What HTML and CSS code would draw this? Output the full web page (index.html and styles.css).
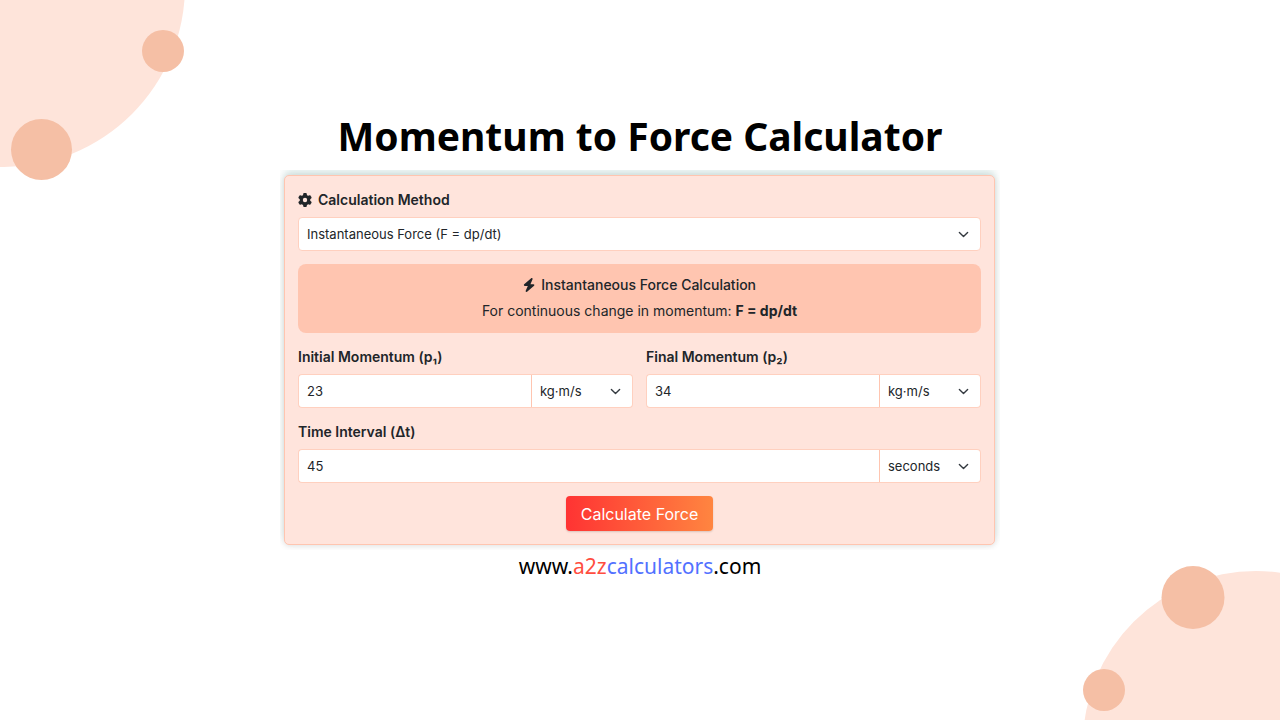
FILE: index.html
```html
<!DOCTYPE html>
<html lang="en">
<head>
    <meta charset="UTF-8">
    <title>Momentum to Force Calculator</title>
    <meta name="viewport" content="width=device-width, initial-scale=1">
    <link rel="stylesheet" href="styles.css">
</head>
<body>
    <svg class="corner corner-top" viewBox="0 0 200 190" aria-hidden="true">
        <circle class="blob" cx="4" cy="-14" r="181"/>
        <circle class="dot" cx="163" cy="51" r="21"/>
        <circle class="dot" cx="41.5" cy="149.5" r="30.5"/>
    </svg>
    <svg class="corner corner-bottom" viewBox="0 0 200 160" aria-hidden="true">
        <circle class="blob" cx="176" cy="184" r="173"/>
        <circle class="dot" cx="113" cy="37.5" r="31.5"/>
        <circle class="dot" cx="24" cy="130" r="21"/>
    </svg>

    <main class="page">
        <h1>Momentum to Force Calculator</h1>

        <div class="card-frame">
            <form class="card" id="forceForm">
                <div class="form-group">
                    <label for="method">
                        <svg class="icon" viewBox="0 0 512 512" aria-hidden="true"><path d="M495.9 166.6c3.2 8.7 .5 18.4-6.4 24.6l-43.3 39.4c1.1 8.3 1.7 16.8 1.7 25.4s-.6 17.1-1.7 25.4l43.3 39.4c6.9 6.2 9.6 15.9 6.4 24.6c-4.4 11.9-9.7 23.3-15.8 34.3l-4.7 8.1c-6.6 11-14 21.4-22.1 31.2c-5.9 7.2-15.7 9.6-24.5 6.8l-55.7-17.7c-13.4 10.3-28.2 18.9-44 25.4l-12.5 57.1c-2 9.1-9 16.3-18.2 17.8c-13.8 2.3-28 3.5-42.5 3.5s-28.7-1.2-42.5-3.5c-9.2-1.5-16.2-8.7-18.2-17.8l-12.5-57.1c-15.8-6.5-30.6-15.1-44-25.4L83.1 425.9c-8.8 2.8-18.6 .3-24.5-6.8c-8.1-9.8-15.5-20.2-22.1-31.2l-4.7-8.1c-6.1-11-11.4-22.4-15.8-34.3c-3.2-8.7-.5-18.4 6.4-24.6l43.3-39.4C64.6 273.1 64 264.6 64 256s.6-17.1 1.7-25.4L22.4 191.2c-6.9-6.2-9.6-15.9-6.4-24.6c4.4-11.9 9.7-23.3 15.8-34.3l4.7-8.1c6.6-11 14-21.4 22.1-31.2c5.9-7.2 15.7-9.6 24.5-6.8l55.7 17.7c13.4-10.3 28.2-18.9 44-25.4l12.5-57.1c2-9.1 9-16.3 18.2-17.8C227.3 1.2 241.5 0 256 0s28.7 1.2 42.5 3.5c9.2 1.5 16.2 8.7 18.2 17.8l12.5 57.1c15.8 6.5 30.6 15.1 44 25.4l55.7-17.7c8.8-2.8 18.6-.3 24.5 6.8c8.1 9.8 15.5 20.2 22.1 31.2l4.7 8.1c6.1 11 11.4 22.4 15.8 34.3zM256 336a80 80 0 1 0 0-160 80 80 0 1 0 0 160z"/></svg>
                        Calculation Method
                    </label>
                    <select id="method">
                        <option>Instantaneous Force (F = dp/dt)</option>
                    </select>
                </div>

                <div class="info-box">
                    <h2>
                        <svg class="icon" viewBox="0 0 448 512" aria-hidden="true"><path d="M349.4 44.6c5.9-13.7 1.5-29.7-10.6-38.5s-28.6-8-39.9 1.8l-256 224c-10 8.8-13.6 22.9-8.9 35.3S50.7 288 64 288H175.5L98.6 467.4c-5.9 13.7-1.5 29.7 10.6 38.5s28.6 8 39.9-1.8l256-224c10-8.8 13.6-22.9 8.9-35.3s-16.6-20.7-30-20.7H272.5L349.4 44.6z"/></svg>
                        Instantaneous Force Calculation
                    </h2>
                    <p>For continuous change in momentum: <strong>F = dp/dt</strong></p>
                </div>

                <div class="row">
                    <div class="form-group">
                        <label for="initialMomentum">Initial Momentum (p₁)</label>
                        <div class="input-group">
                            <input type="text" inputmode="decimal" id="initialMomentum" value="23">
                            <select aria-label="Initial momentum unit">
                                <option>kg·m/s</option>
                            </select>
                        </div>
                    </div>
                    <div class="form-group">
                        <label for="finalMomentum">Final Momentum (p₂)</label>
                        <div class="input-group">
                            <input type="text" inputmode="decimal" id="finalMomentum" value="34">
                            <select aria-label="Final momentum unit">
                                <option>kg·m/s</option>
                            </select>
                        </div>
                    </div>
                </div>

                <div class="form-group">
                    <label for="timeInterval">Time Interval (Δt)</label>
                    <div class="input-group">
                        <input type="text" inputmode="decimal" id="timeInterval" value="45">
                        <select aria-label="Time unit">
                            <option>seconds</option>
                        </select>
                    </div>
                </div>

                <button type="button">Calculate Force</button>
            </form>
        </div>

        <a class="site-link" href="#">www.<span class="red">a2z</span><span class="blue">calculators</span>.com</a>
    </main>
</body>
</html>
```
FILE: styles.css
```css
* {
    box-sizing: border-box;
}

body {
    margin: 0;
    min-height: 100vh;
    position: relative;
    overflow: hidden;
    background: white;
    color: #212529;
    font-family: Inter, sans-serif;
    font-size: 13px;
}

/* corner decorations */
.corner {
    position: absolute;
    width: 200px;
}

.corner-top {
    top: 0;
    left: 0;
}

.corner-bottom {
    right: 0;
    bottom: 0;
}

.blob {
    fill: #fee4da;
}

.dot {
    fill: #f5bfa5;
}

.page {
    position: relative;
    max-width: 720px;
    margin: 0 auto;
    padding-top: 104px;
    text-align: center;
}

h1 {
    margin: 0 0 2px;
    color: black;
    font-family: "Noto Sans", sans-serif;
    font-size: 39px;
    font-weight: 700;
    line-height: 64px;
}

/* the card shadow stops at the edge of this frame */
.card-frame {
    padding: 5px 5px 5px 4px;
    overflow: hidden;
}

.card {
    display: flex;
    flex-direction: column;
    gap: 13px;
    padding: 13px;
    background: #ffe4dc;
    border: 1px solid #ffc5b0;
    border-radius: 5px;
    box-shadow: 0 -6px 10px rgba(0, 105, 92, 0.14), 0 1px 6px rgba(0, 0, 0, 0.12);
    text-align: left;
}

label {
    display: flex;
    align-items: center;
    gap: 6px;
    margin-bottom: 7px;
    font-size: 14px;
    font-weight: 600;
    line-height: 21px;
}

.icon {
    height: 14px;
    fill: #212529;
}

input, select {
    width: 100%;
    height: 34px;
    padding: 0 8px;
    border: 1px solid #ffd0bf;
    border-radius: 4px;
    background-color: white;
    color: #212529;
    font-family: inherit;
    font-size: 13px;
}

select {
    appearance: none;
    background-image: url("data:image/svg+xml,%3Csvg xmlns='http://www.w3.org/2000/svg' viewBox='0 0 16 16'%3E%3Cpath fill='none' stroke='%23343a40' stroke-linecap='round' stroke-linejoin='round' stroke-width='2' d='m2 5 6 6 6-6'/%3E%3C/svg%3E");
    background-repeat: no-repeat;
    background-position: right 11px center;
    background-size: 11px;
}

.row {
    display: grid;
    grid-template-columns: 1fr 1fr;
    gap: 13px;
}

.input-group {
    display: flex;
}

.input-group input {
    flex: 1;
    min-width: 0;
    border-right: none;
    border-radius: 4px 0 0 4px;
}

.input-group select {
    width: 102px;
    border-left-color: #ffc5b0;
    border-radius: 0 4px 4px 0;
}

.info-box {
    padding: 8px 13px 9px;
    border-radius: 8px;
    background: #ffc5b0;
    text-align: center;
}

.info-box h2 {
    display: flex;
    justify-content: center;
    align-items: center;
    gap: 6px;
    margin: 0;
    font-size: 14px;
    font-weight: 500;
    line-height: 26px;
}

.info-box p {
    margin: 0;
    font-size: 14px;
    line-height: 26px;
}

.info-box strong {
    font-weight: 700;
}

button {
    align-self: center;
    height: 35px;
    padding: 0 15px;
    border: none;
    border-radius: 4px;
    background: linear-gradient(to right, #ff3333, #ff8540);
    box-shadow: 0 1px 2px rgba(0, 0, 0, 0.15);
    color: white;
    font-family: inherit;
    font-size: 16px;
    cursor: pointer;
}

.site-link {
    color: black;
    font-family: "Noto Sans", sans-serif;
    font-size: 21px;
    line-height: 32px;
    text-decoration: none;
}

.red {
    color: #ff4d40;
}

.blue {
    color: #5271ff;
}
```
